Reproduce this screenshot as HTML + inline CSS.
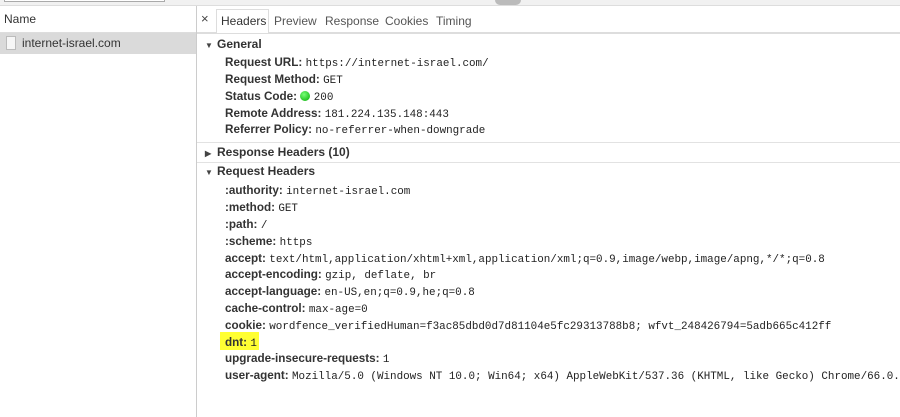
<!DOCTYPE html>
<html><head><style>
*{margin:0;padding:0;box-sizing:border-box}
body{width:900px;height:417px;overflow:hidden;background:#fff;font-family:"Liberation Sans",sans-serif;font-size:12px;color:#222;position:relative}
.a{position:absolute;white-space:nowrap}
.m{font-family:"Liberation Mono",monospace;font-size:10.9px;color:#222}
.k{color:#333;font-weight:bold;font-size:11.7px}
.r{position:absolute;left:225px;height:17px;line-height:17px;white-space:nowrap}
.h{position:absolute;left:205px;font-weight:bold;color:#333;height:17px;line-height:17px}
.t{font-size:8px;display:inline-block;width:12px;color:#444}
</style></head><body>
<div class="a" style="left:0;top:0;width:900px;height:6px;background:#f1f1f1;border-bottom:1px solid #ddd"></div>
<div class="a" style="left:4px;top:0;width:161px;height:2px;border:1px solid #aaa;border-top:none;background:#fff"></div>
<div class="a" style="left:495px;top:0;width:26px;height:5px;background:#bbb;border-radius:0 0 5px 5px"></div>
<div class="a" style="left:196px;top:6px;width:1px;height:411px;background:#ccc"></div>
<div class="a" style="left:0;top:32px;width:196px;height:1px;background:#ddd"></div>
<div class="a" style="left:4px;top:12px;color:#333">Name</div>
<div class="a" style="left:0;top:33px;width:196px;height:21px;background:#dadada"></div>
<div class="a" style="left:6px;top:36px;width:10px;height:14px;background:#f6f6f6;border:1px solid #bbb"></div>
<div class="a" style="left:22px;top:36px;color:#333">internet-israel.com</div>
<div class="a" style="left:197px;top:32px;width:703px;height:2px;background:#ddd"></div>
<div class="a" style="left:201px;top:11px;color:#444;font-size:13px">×</div>
<div class="a" style="left:216px;top:9px;width:53px;height:24px;border:1px solid #ddd;border-bottom:none;background:#fff"></div>
<div class="a" style="left:221px;top:14px;color:#333">Headers</div>
<div class="a" style="left:274px;top:14px;color:#555">Preview</div>
<div class="a" style="left:325px;top:14px;color:#555">Response</div>
<div class="a" style="left:385px;top:14px;color:#555">Cookies</div>
<div class="a" style="left:436px;top:14px;color:#555">Timing</div>

<div class="h" style="top:36px"><span class="t">▼</span>General</div>
<div class="r" style="top:54px"><span class="k">Request URL:</span> <span class="m">https://internet-israel.com/</span></div>
<div class="r" style="top:71px"><span class="k">Request Method:</span> <span class="m">GET</span></div>
<div class="r" style="top:88px"><span class="k">Status Code:</span> <span style="display:inline-block;width:10px;height:10px;border-radius:50%;background:radial-gradient(circle at 40% 35%,#7f7,#0a0);vertical-align:-1px"></span> <span class="m">200</span></div>
<div class="r" style="top:105px"><span class="k">Remote Address:</span> <span class="m">181.224.135.148:443</span></div>
<div class="r" style="top:121px"><span class="k">Referrer Policy:</span> <span class="m">no-referrer-when-downgrade</span></div>
<div class="a" style="left:197px;top:142px;width:703px;height:1px;background:#e2e2e2"></div>
<div class="h" style="top:144px"><span class="t">▶</span>Response Headers (10)</div>
<div class="a" style="left:197px;top:162px;width:703px;height:1px;background:#e2e2e2"></div>
<div class="h" style="top:163px"><span class="t">▼</span>Request Headers</div>
<div class="r" style="top:182px"><span class="k">:authority:</span> <span class="m">internet-israel.com</span></div>
<div class="r" style="top:199px"><span class="k">:method:</span> <span class="m">GET</span></div>
<div class="r" style="top:216px"><span class="k">:path:</span> <span class="m">/</span></div>
<div class="r" style="top:233px"><span class="k">:scheme:</span> <span class="m">https</span></div>
<div class="r" style="top:250px"><span class="k">accept:</span> <span class="m">text/html,application/xhtml+xml,application/xml;q=0.9,image/webp,image/apng,*/*;q=0.8</span></div>
<div class="r" style="top:266px"><span class="k">accept-encoding:</span> <span class="m">gzip, deflate, br</span></div>
<div class="r" style="top:283px"><span class="k">accept-language:</span> <span class="m">en-US,en;q=0.9,he;q=0.8</span></div>
<div class="r" style="top:300px"><span class="k">cache-control:</span> <span class="m">max-age=0</span></div>
<div class="r" style="top:317px"><span class="k">cookie:</span> <span class="m">wordfence_verifiedHuman=f3ac85dbd0d7d81104e5fc29313788b8; wfvt_248426794=5adb665c412ff</span></div>
<div class="a" style="left:220px;top:332px;width:39px;height:18px;background:#ffff33"></div>
<div class="r" style="top:334px"><span class="k">dnt:</span> <span class="m">1</span></div>
<div class="r" style="top:350px"><span class="k">upgrade-insecure-requests:</span> <span class="m">1</span></div>
<div class="r" style="top:367px"><span class="k">user-agent:</span> <span class="m">Mozilla/5.0 (Windows NT 10.0; Win64; x64) AppleWebKit/537.36 (KHTML, like Gecko) Chrome/66.0.</span></div>
</body></html>
